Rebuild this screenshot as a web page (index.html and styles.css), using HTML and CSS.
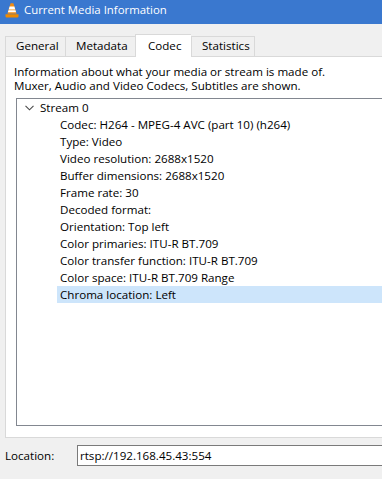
FILE: index.html
```html
<!DOCTYPE html>
<html>
<head>
<meta charset="utf-8">
<link rel="stylesheet" href="styles.css">
</head>
<body>
<div class="window">
  <div class="titlebar">
    <svg class="app-icon" width="16" height="16" viewBox="0 0 16 16">
      <path d="M6.6 1.2 h2.8 l3.2 10.6 h-9.2 z" fill="#f28c13"/>
      <path d="M5.6 4.6 h4.8 l0.9 2.8 h-6.6 z" fill="#fff"/>
      <path d="M4.5 8.3 h7 l0.6 2 h-8.2 z" fill="#fff"/>
      <path d="M1.5 12.2 h13 v2.4 q0 0.8 -0.8 0.8 h-11.4 q-0.8 0 -0.8 -0.8 z" fill="#f08a00"/>
    </svg>
    <span class="title">Current Media Information</span>
  </div>
  <div class="tabs">
    <div class="tab">General</div>
    <div class="tab">Metadata</div>
    <div class="tab active">Codec</div>
    <div class="tab">Statistics</div>
  </div>
  <div class="pane">
    <div class="info">Information about what your media or stream is made of.<br>Muxer, Audio and Video Codecs, Subtitles are shown.</div>
    <div class="tree">
      <div class="row stream">
        <svg class="chev" width="9" height="6" viewBox="0 0 9 6"><polyline points="0.5,0.8 4.5,4.8 8.5,0.8" fill="none" stroke="#4a4a4a" stroke-width="1.1"/></svg>
        <span>Stream 0</span>
      </div>
      <div class="row child">Codec: H264 - MPEG-4 AVC (part 10) (h264)</div>
      <div class="row child">Type: Video</div>
      <div class="row child">Video resolution: 2688x1520</div>
      <div class="row child">Buffer dimensions: 2688x1520</div>
      <div class="row child">Frame rate: 30</div>
      <div class="row child">Decoded format:</div>
      <div class="row child">Orientation: Top left</div>
      <div class="row child">Color primaries: ITU-R BT.709</div>
      <div class="row child">Color transfer function: ITU-R BT.709</div>
      <div class="row child">Color space: ITU-R BT.709 Range</div>
      <div class="row child selected">Chroma location: Left</div>
    </div>
  </div>
  <div class="location">
    <span class="loc-label">Location:</span>
    <div class="loc-input">rtsp://192.168.45.43:554</div>
  </div>
</div>
</body>
</html>
```
FILE: styles.css
```css
html, body {
  margin: 0;
  padding: 0;
}
body {
  width: 382px;
  height: 479px;
  overflow: hidden;
  background: #f0f0f0;
  font-family: "Open Sans", "Noto Sans", sans-serif;
  font-size: 11.6px;
  color: #000;
}
.window {
  width: 382px;
  overflow: hidden;
}
.titlebar {
  height: 24px;
  box-sizing: border-box;
  background: #3a78cf;
  display: flex;
  align-items: flex-start;
  padding: 2px 0 0 4px;
  gap: 4px;
}
.app-icon {
  display: block;
}
.title {
  color: #fff;
  font-size: 11.4px;
  line-height: 15px;
}
.tabs {
  display: flex;
  align-items: flex-end;
  padding-left: 5px;
  margin-top: 10px;
  height: 22px;
  position: relative;
  z-index: 1;
}
.tab {
  height: 20px;
  box-sizing: border-box;
  border: 1px solid #d9d9d9;
  border-bottom: none;
  border-right: none;
  background: #f0f0f0;
  padding: 0 10px 0 10px;
  line-height: 18px;
}
.tab:nth-child(1) { width: 60px; }
.tab:nth-child(2) { width: 70px; }
.tab:nth-child(4) { width: 64px; border-right: 1px solid #d9d9d9; }
.tab.active {
  width: 56px;
  height: 23px;
  margin-bottom: -1px;
  background: #fff;
  border-right: none;
  padding-left: 12px;
  line-height: 21px;
}
.tab.active + .tab {
  border-left: 1px solid #d9d9d9;
}
.pane {
  margin-left: 5px;
  width: 420px;
  height: 382px;
  box-sizing: border-box;
  border: 1px solid #d9d9d9;
  background: #fff;
  padding-top: 8px;
}
.info {
  padding-left: 8px;
  line-height: 14px;
}
.tree {
  margin-top: 5px;
  margin-left: 10px;
  height: 328px;
  box-sizing: border-box;
  border: 1px solid #828790;
  background: #fff;
}
.row {
  height: 17px;
  line-height: 17px;
  white-space: nowrap;
}
.stream {
  display: flex;
  align-items: center;
  padding-left: 8px;
}
.chev {
  display: block;
  margin-right: 6px;
}
.child {
  margin-left: 40px;
  padding-left: 3px;
}
.selected {
  background: #cde5fb;
}
.location {
  display: flex;
  align-items: center;
  margin-top: 7px;
  padding-left: 5px;
}
.loc-label {
  width: 72px;
  flex: none;
}
.loc-input {
  width: 340px;
  flex: none;
  height: 21px;
  box-sizing: border-box;
  border: 1px solid #7a7a7a;
  background: #fff;
  padding-left: 2px;
  line-height: 19px;
}
```
